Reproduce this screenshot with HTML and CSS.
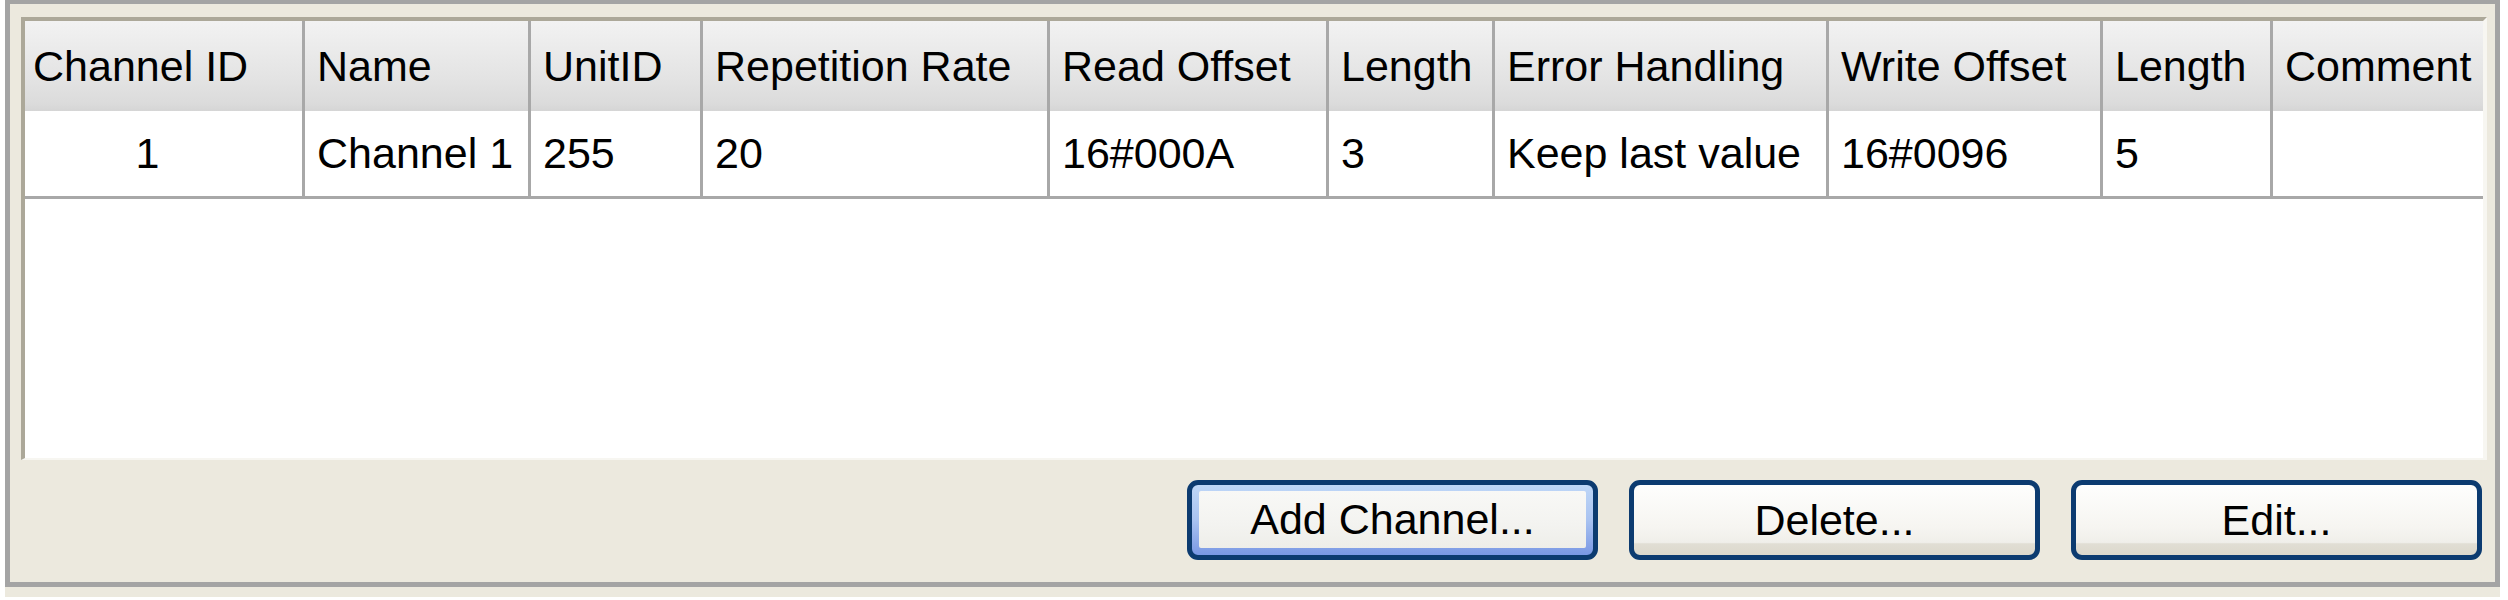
FILE: index.html
```html
<!DOCTYPE html>
<html>
<head>
<meta charset="utf-8">
<link rel="stylesheet" href="styles.css">
</head>
<body>
<div class="dialog">
  <div class="frame">
    <div class="panel">
      <div class="grid">
        <div class="cell head first">Channel ID</div>
        <div class="cell head">Name</div>
        <div class="cell head">UnitID</div>
        <div class="cell head">Repetition Rate</div>
        <div class="cell head">Read Offset</div>
        <div class="cell head">Length</div>
        <div class="cell head">Error Handling</div>
        <div class="cell head">Write Offset</div>
        <div class="cell head">Length</div>
        <div class="cell head last">Comment</div>

        <div class="cell data center">1</div>
        <div class="cell data">Channel 1</div>
        <div class="cell data">255</div>
        <div class="cell data">20</div>
        <div class="cell data">16#000A</div>
        <div class="cell data">3</div>
        <div class="cell data">Keep last value</div>
        <div class="cell data">16#0096</div>
        <div class="cell data">5</div>
        <div class="cell data last"></div>
      </div>
    </div>
    <div class="bar">
      <button class="btn default"><span class="face">Add Channel...</span></button>
      <button class="btn"><span class="face">Delete...</span></button>
      <button class="btn"><span class="face">Edit...</span></button>
    </div>
  </div>
</div>
</body>
</html>
```

FILE: styles.css
```css
html, body {
  margin: 0;
  padding: 0;
  background: #ffffff;
}

body {
  font-family: "Liberation Sans", Arial, sans-serif;
  font-size: 43px;
  color: #000;
}

.dialog {
  margin-left: 5px;
  width: 2495px;
  padding-bottom: 10px;
  background: #ece9de;
}

.frame {
  box-sizing: border-box;
  width: 2495px;
  border-top: 4px solid #a4a4a4;
  border-left: 5px solid #a4a4a4;
  border-right: 5px solid #a4a4a4;
  border-bottom: 5px solid #a4a4a4;
  background: #ece9de;
  padding: 13px 8px 0 11px;
  display: flex;
  flex-direction: column;
}

.panel {
  box-sizing: border-box;
  width: 2466px;
  height: 443px;
  background: #ffffff;
  border-top: 4px solid #aca899;
  border-left: 4px solid #aca899;
  border-right: 4px solid #f7f6f1;
  border-bottom: 2px solid #f7f6f1;
}

.grid {
  display: grid;
  grid-template-columns: 280px 226px 172px 347px 279px 166px 334px 274px 170px 210px;
  grid-template-rows: 90px 88px;
}

.cell {
  box-sizing: border-box;
  border-right: 3px solid #a8a8a8;
  display: flex;
  align-items: center;
  padding-left: 12px;
  white-space: nowrap;
  overflow: hidden;
}

.cell.last {
  border-right: 0;
}

.head {
  background: linear-gradient(to bottom, #f2f2f2 0%, #ededed 22%, #e3e3e3 65%, #dbdbdb 92%, #d5d5d5 100%);
}

.head.first {
  padding-left: 8px;
}

.data {
  background: #ffffff;
  border-bottom: 3px solid #a8a8a8;
}

.data.center {
  justify-content: center;
  padding-left: 0;
  padding-right: 32px;
}

.bar {
  height: 122px;
  box-sizing: border-box;
  padding: 20px 5px 0 0;
  display: flex;
  justify-content: flex-end;
  gap: 31px;
}

.btn {
  box-sizing: border-box;
  width: 411px;
  height: 80px;
  padding: 0;
  margin: 0;
  border: 5px solid #0c3b70;
  border-radius: 11px;
  background: linear-gradient(to bottom, #fefefd 0%, #f6f5f1 60%, #f0efea 82%, #e1ded4 84%, #dcd8cc 100%);
  font-family: "Liberation Sans", Arial, sans-serif;
  font-size: 43px;
  color: #000;
  display: flex;
  align-items: stretch;
}

.btn .face {
  flex: 1;
  display: flex;
  align-items: center;
  justify-content: center;
  border-radius: 5px;
}

.btn.default {
  background: linear-gradient(to bottom, #bfd7f7 0%, #a9c3f1 50%, #7a98e4 100%);
}

.btn.default .face {
  margin: 6px 7px 7px 7px;
  background: linear-gradient(to bottom, #f8f8f6 0%, #f3f3f0 60%, #eeeee9 100%);
  border-radius: 2px;
}
```
